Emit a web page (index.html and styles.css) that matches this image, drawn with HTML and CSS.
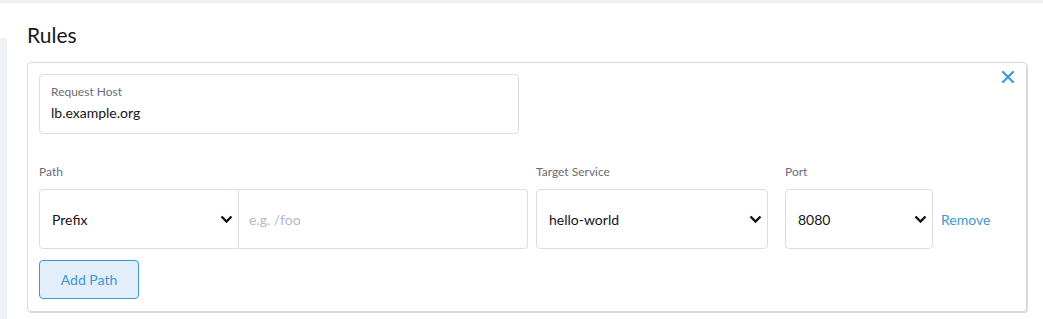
FILE: index.html
```html
<!DOCTYPE html>
<html lang="en">
<head>
<meta charset="utf-8">
<title>Rules</title>
<link rel="stylesheet" href="styles.css">
</head>
<body>
<div class="topbar"></div>
<div class="layout">
  <aside class="sidebar"></aside>
  <main class="main">
    <h2 class="title">Rules</h2>
    <section class="rule-card">
      <button class="close" type="button" aria-label="Remove rule">
        <svg width="12" height="12" viewBox="0 0 12 12"><path d="M1 1 L11 11 M11 1 L1 11" stroke="#3d98d3" stroke-width="2.2" stroke-linecap="square" fill="none"/></svg>
      </button>
      <div class="host-field">
        <div class="field-label">Request Host</div>
        <div class="field-value">lb.example.org</div>
      </div>
      <div class="paths-row">
        <div class="col col-path">
          <div class="label">Path</div>
          <div class="path-group">
            <div class="select select-prefix">
              <span>Prefix</span>
              <svg class="chev" width="13" height="8" viewBox="0 0 13 8"><path d="M1.5 1.5 L6.5 6.5 L11.5 1.5" stroke="#111" stroke-width="2.4" fill="none"/></svg>
            </div>
            <div class="text-input placeholder">e.g. /foo</div>
          </div>
        </div>
        <div class="col col-service">
          <div class="label">Target Service</div>
          <div class="select">
            <span>hello-world</span>
            <svg class="chev" width="13" height="8" viewBox="0 0 13 8"><path d="M1.5 1.5 L6.5 6.5 L11.5 1.5" stroke="#111" stroke-width="2.4" fill="none"/></svg>
          </div>
        </div>
        <div class="col col-port">
          <div class="label">Port</div>
          <div class="select">
            <span>8080</span>
            <svg class="chev" width="13" height="8" viewBox="0 0 13 8"><path d="M1.5 1.5 L6.5 6.5 L11.5 1.5" stroke="#111" stroke-width="2.4" fill="none"/></svg>
          </div>
        </div>
        <a class="remove" href="#">Remove</a>
      </div>
      <button class="add-path" type="button">Add Path</button>
    </section>
  </main>
</div>
</body>
</html>
```

FILE: styles.css
```css
* { box-sizing: border-box; }

html, body {
  margin: 0;
  padding: 0;
  background: #ffffff;
  font-family: Lato, "Noto Sans", sans-serif;
  color: #141419;
}

.topbar {
  height: 3px;
  background: #f0f1f6;
}

.layout {
  display: flex;
  min-height: 316px;
}

.sidebar {
  width: 7px;
  margin-top: 35px;
  background: #f0f1f6;
  flex: none;
}

.main {
  flex: 1;
  padding: 0 16px 0 20px;
}

.title {
  margin: 19px 0 15px;
  font-size: 21px;
  line-height: 25px;
  font-weight: 400;
  color: #18191e;
}

.rule-card {
  position: relative;
  border: 1px solid #d5d9e3;
  border-radius: 4px;
  box-shadow: 1px 1px 0 #d5d9e3;
  padding: 11px 11px 12px;
}

.close {
  position: absolute;
  top: 8px;
  right: 12px;
  width: 12px;
  height: 12px;
  padding: 0;
  border: 0;
  background: none;
  display: flex;
  cursor: pointer;
}

.host-field {
  width: 480px;
  height: 60px;
  border: 1px solid #dcdee5;
  border-radius: 4px;
  padding: 9px 11px 0;
}

.field-label,
.label {
  font-size: 12px;
  line-height: 15px;
  color: #6b6c74;
}

.field-label { margin-bottom: 5px; }

.field-value {
  font-size: 14px;
  line-height: 17px;
  color: #141419;
}

.paths-row {
  display: flex;
  align-items: flex-end;
  margin-top: 30px;
}

.label { margin-bottom: 10px; }

.col-path { width: 489px; }
.col-service { width: 232px; margin-left: 8px; }
.col-port { width: 148px; margin-left: 17px; }

.path-group {
  display: flex;
}

.select {
  height: 60px;
  border: 1px solid #dcdee5;
  border-radius: 4px;
  padding: 0 5px 0 12px;
  display: flex;
  align-items: center;
  justify-content: space-between;
  font-size: 14px;
  color: #141419;
}

.select-prefix {
  width: 200px;
  border-radius: 4px 0 0 4px;
  flex: none;
}

.chev { display: block; }

.text-input {
  flex: 1;
  height: 60px;
  border: 1px solid #dcdee5;
  border-left: 0;
  border-radius: 0 4px 4px 0;
  padding: 0 10px;
  display: flex;
  align-items: center;
  font-size: 14px;
}

.placeholder { color: #b4b7c8; }

.remove {
  height: 60px;
  margin-left: 8px;
  display: flex;
  align-items: center;
  font-size: 14px;
  color: #3d98d3;
  text-decoration: none;
}

.add-path {
  display: flex;
  align-items: center;
  justify-content: center;
  margin-top: 11px;
  width: 100px;
  height: 39px;
  padding: 0;
  border: 1px solid #3d98d3;
  border-radius: 4px;
  background: #e2eef9;
  color: #3d98d3;
  font-family: Lato, "Noto Sans", sans-serif;
  font-size: 14px;
  cursor: pointer;
}
```
